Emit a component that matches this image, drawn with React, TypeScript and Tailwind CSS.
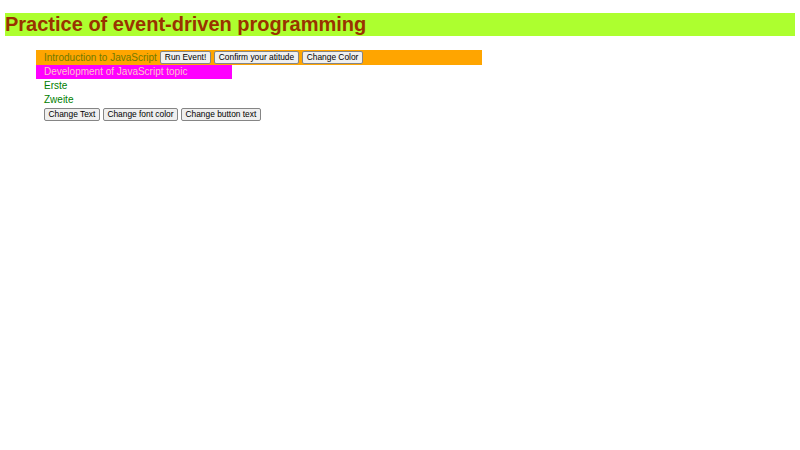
import React from "react";

const btn =
  "h-[13px] px-[3.5px] border border-[#858585] bg-[#efefef] rounded-[2px] text-[8.4px] leading-[11px] text-black flex items-center whitespace-nowrap";

export default function App() {
  return (
    <div
      className="w-[800px] h-[450px] bg-white pt-[13px] px-[5px]"
      style={{ fontFamily: '"Liberation Sans", Arial, sans-serif' }}
    >
      <h1 className="h-[23px] bg-[#adff2f] text-[20px] leading-[23px] font-bold text-[#993300]">
        Practice of event-driven programming
      </h1>
      <div className="mt-[14px] ml-[31px] text-[10px]">
        <div className="w-[446px] h-[15px] bg-[#ffa500] flex items-center gap-[3.5px] pl-[8px]">
          <span className="text-[#6f7a00] leading-[15px]">Introduction to JavaScript</span>
          <button className={btn}>Run Event!</button>
          <button className={btn}>Confirm your atitude</button>
          <button className={btn}>Change Color</button>
        </div>
        <div className="w-[196px] h-[14px] bg-[#ff00ff] pl-[8px] leading-[14px] text-[#ffc0cb]">
          Development of JavaScript topic
        </div>
        <div className="h-[14px] pl-[8px] leading-[14px] text-[#008000]">Erste</div>
        <div className="h-[14px] pl-[8px] leading-[14px] text-[#008000]">Zweite</div>
        <div className="mt-[1px] pl-[8px] flex gap-[3px]">
          <button className={btn}>Change Text</button>
          <button className={btn}>Change font color</button>
          <button className={btn}>Change button text</button>
        </div>
      </div>
    </div>
  );
}
